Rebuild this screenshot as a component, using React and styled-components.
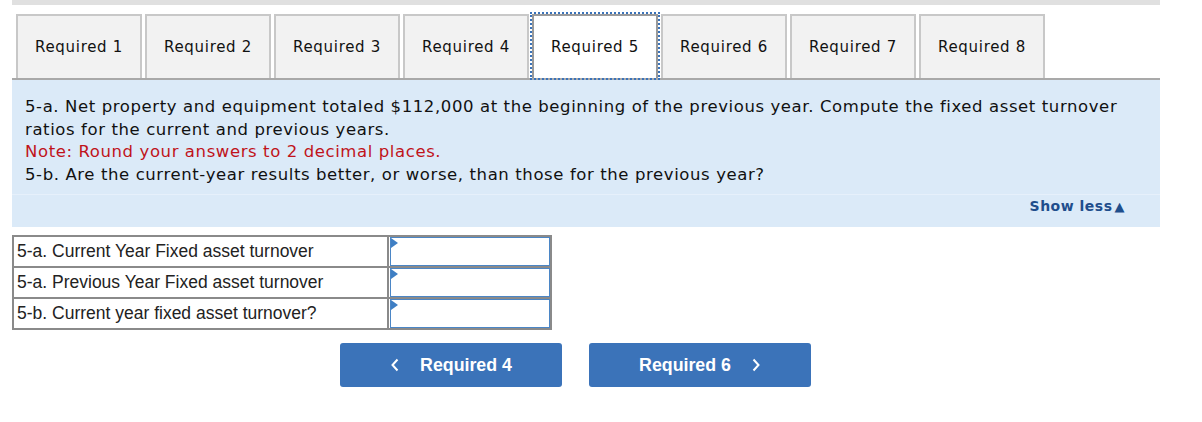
import React, { useState } from 'react'
import styled, { createGlobalStyle } from 'styled-components'

const Global = createGlobalStyle`
  body {
    margin: 0;
    background: #ffffff;
    font-family: 'DejaVu Sans', Verdana, sans-serif;
  }
`

const tabs = [1, 2, 3, 4, 5, 6, 7, 8]

const rows = [
  '5-a. Current Year Fixed asset turnover',
  '5-a. Previous Year Fixed asset turnover',
  '5-b. Current year fixed asset turnover?',
]

export default function App() {
  const [active, setActive] = useState(5)
  const [values, setValues] = useState(['', '', ''])

  const handleChange = (i, v) => {
    const next = [...values]
    next[i] = v
    setValues(next)
  }

  return (
    <Page>
      <Global />
      <TopBar />
      <TabRow>
        {tabs.map((n) => (
          <Tab key={n} active={n === active} onClick={() => setActive(n)}>
            Required {n}
          </Tab>
        ))}
      </TabRow>
      <Panel>
        <Question>
          <p>
            5-a. Net property and equipment totaled $112,000 at the beginning of the previous year. Compute the fixed asset turnover
            ratios for the current and previous years.
          </p>
          <Note>Note: Round your answers to 2 decimal places.</Note>
          <p>5-b. Are the current-year results better, or worse, than those for the previous year?</p>
        </Question>
        <ShowLess>
          Show less<span className="arrow">▲</span>
        </ShowLess>
      </Panel>
      <Answers>
        <tbody>
          {rows.map((label, i) => (
            <tr key={label}>
              <Label>{label}</Label>
              <InputCell>
                <Field>
                  <input value={values[i]} onChange={(e) => handleChange(i, e.target.value)} />
                </Field>
              </InputCell>
            </tr>
          ))}
        </tbody>
      </Answers>
      <NavRow>
        <NavButton>
          <Chevron>
            <svg width="10" height="14" viewBox="0 0 10 14">
              <path d="M7.5 1.5 L2.5 7 L7.5 12.5" fill="none" stroke="#fff" strokeWidth="2" />
            </svg>
          </Chevron>
          Required 4
        </NavButton>
        <NavButton>
          Required 6
          <Chevron>
            <svg width="10" height="14" viewBox="0 0 10 14">
              <path d="M2.5 1.5 L7.5 7 L2.5 12.5" fill="none" stroke="#fff" strokeWidth="2" />
            </svg>
          </Chevron>
        </NavButton>
      </NavRow>
    </Page>
  )
}

const Page = styled.div`
  width: 1148px;
  padding-left: 12px;
`

const TopBar = styled.div`
  height: 5px;
  background-color: #e0e0e0;
`

const TabRow = styled.div`
  display: flex;
  gap: 3px;
  margin-top: 9px;
  padding-left: 4px;
`

const Tab = styled.div`
  box-sizing: border-box;
  width: 126px;
  height: 64px;
  display: flex;
  align-items: center;
  justify-content: center;
  font-size: 15px;
  letter-spacing: 0.7px;
  color: #111;
  cursor: pointer;
  background-color: ${(p) => (p.active ? '#ffffff' : '#f2f2f2')};
  border: 2px solid ${(p) => (p.active ? '#9a9a9a' : '#c8c8c8')};
  border-bottom: none;
  outline: ${(p) => (p.active ? '2px dotted #3b73b9' : 'none')};
  outline-offset: 0px;
`

const Panel = styled.div`
  background-color: #dbeaf8;
  border-top: 2px solid #a9a9a9;
`

const Question = styled.div`
  padding: 16px 13px 8px;
  border-bottom: 1px solid #e6f0fb;
  font-size: 16.5px;
  letter-spacing: 0.6px;
  line-height: 22.6px;
  color: #111;

  p {
    margin: 0;
  }
`

const Note = styled.p`
  color: #c0131b;
`

const ShowLess = styled.div`
  height: 32px;
  line-height: 22px;
  text-align: right;
  padding-right: 35px;
  font-size: 14px;
  letter-spacing: 0.5px;
  font-weight: bold;
  color: #1f4e8c;

  .arrow {
    font-size: 13px;
    margin-left: 2px;
  }
`

const Answers = styled.table`
  margin-top: 8px;
  border-collapse: collapse;
  width: 540px;
  font-family: 'Liberation Sans', Arial, sans-serif;
  font-size: 17.5px;
  color: #222;
`

const Label = styled.td`
  box-sizing: border-box;
  width: 375px;
  height: 31px;
  padding: 0 3px;
  border: 2px solid #8a8a8a;
`

const InputCell = styled.td`
  box-sizing: border-box;
  padding: 0;
  border: 2px solid #8a8a8a;
  border-left: 1px solid #8a8a8a;
`

const Field = styled.div`
  position: relative;
  height: 27px;
  margin: 0 0 0 1px;
  border: 1px solid #4b86c6;
  background: #fff;

  &::before {
    content: '';
    position: absolute;
    left: 0;
    top: 0;
    border-top: 5px solid transparent;
    border-bottom: 5px solid transparent;
    border-left: 7px solid #3f7fc4;
  }

  input {
    width: 100%;
    height: 100%;
    box-sizing: border-box;
    border: none;
    background: transparent;
    outline: none;
  }
`

const NavRow = styled.div`
  display: flex;
  gap: 27px;
  margin-top: 13px;
  padding-left: 328px;
`

const NavButton = styled.button`
  display: flex;
  align-items: center;
  justify-content: center;
  gap: 20px;
  width: 222px;
  height: 44px;
  border: none;
  border-radius: 3px;
  background-color: #3b73b9;
  color: #fff;
  font-family: 'Liberation Sans', Arial, sans-serif;
  font-size: 17.8px;
  font-weight: bold;
  cursor: pointer;
`

const Chevron = styled.span`
  display: flex;
  align-items: center;
`
